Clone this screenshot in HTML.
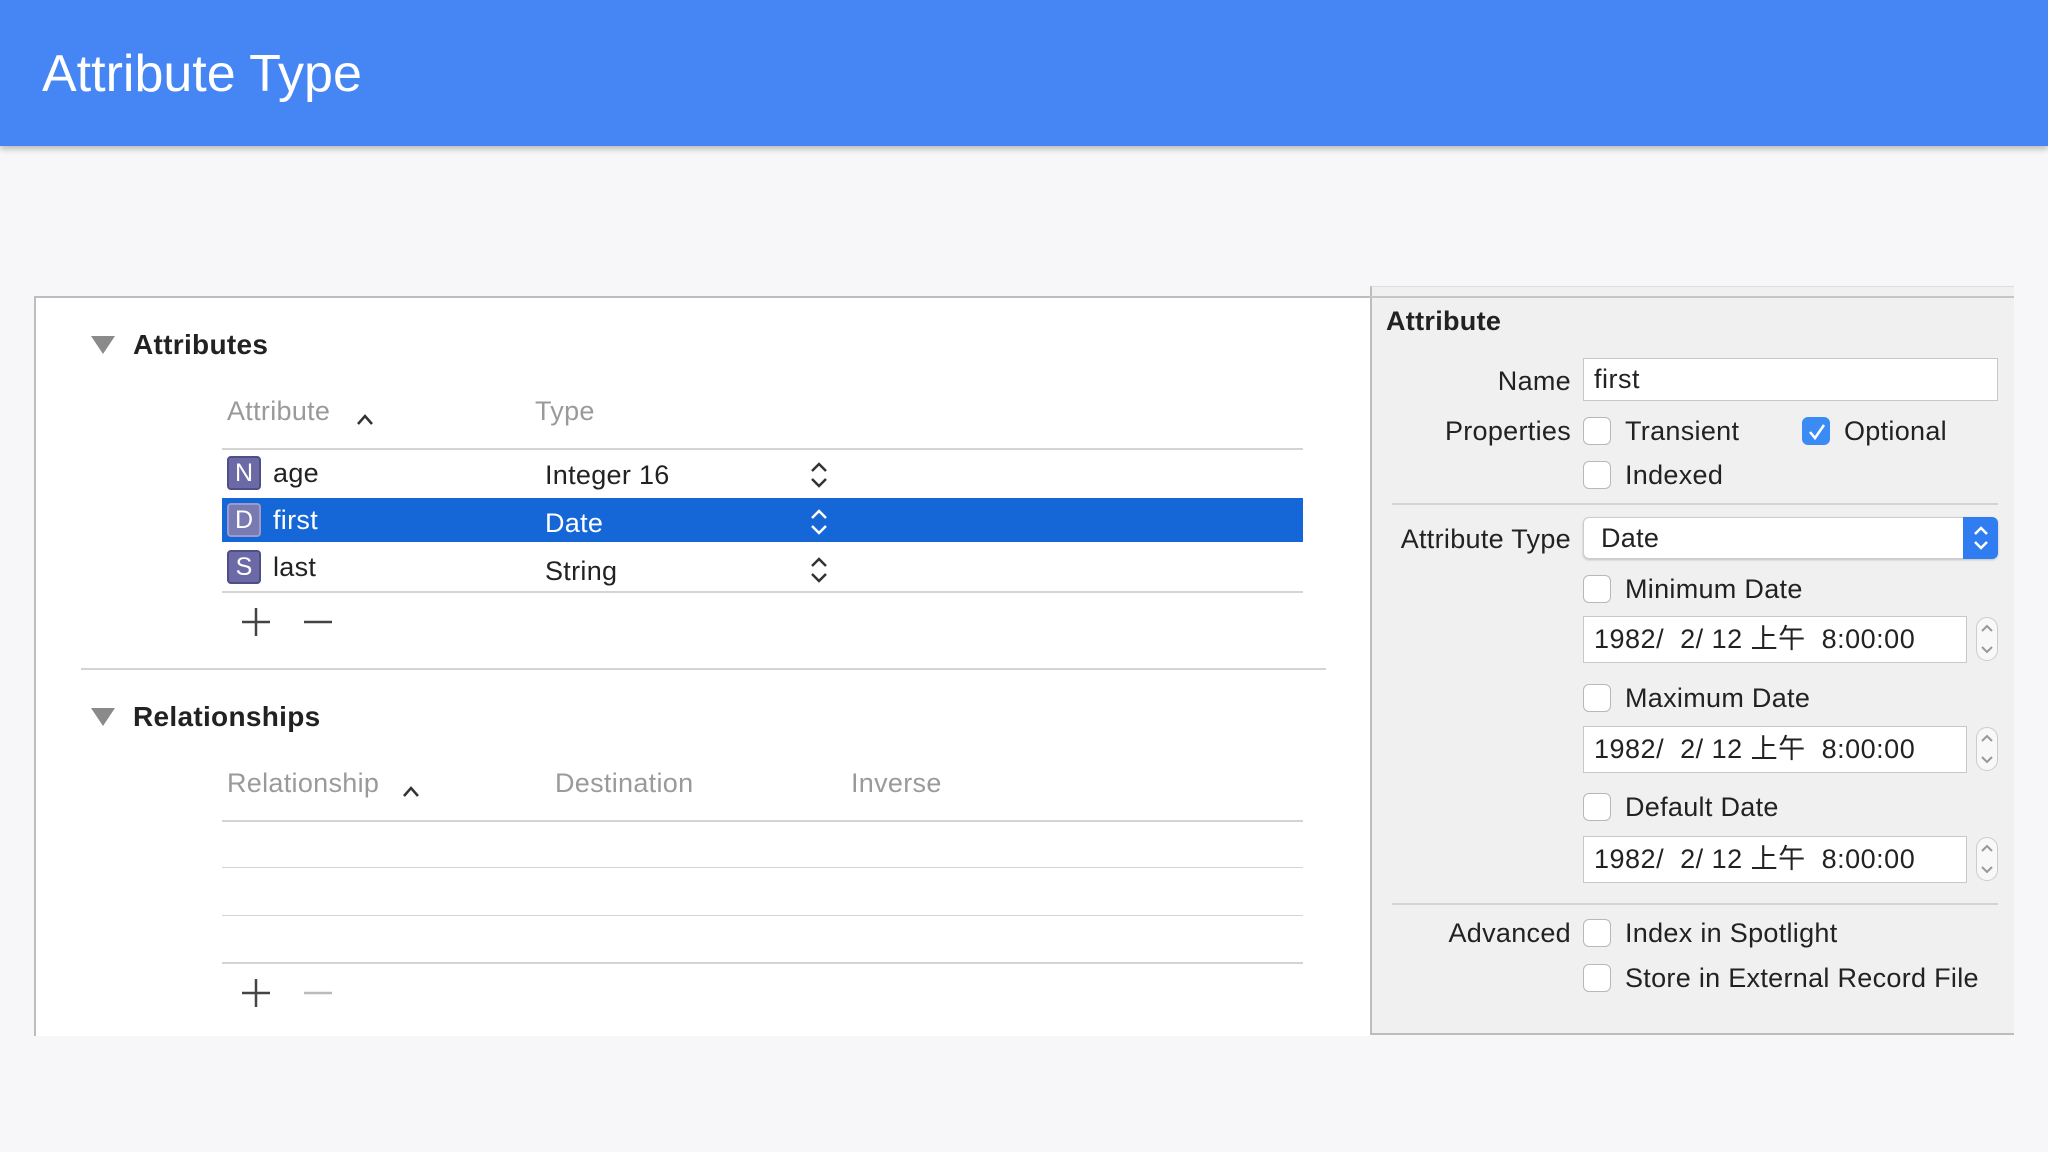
<!DOCTYPE html>
<html><head><meta charset="utf-8"><style>
*{margin:0;padding:0;box-sizing:border-box}
body{width:2048px;height:1152px;background:#f7f7f9;font-family:"Liberation Sans","Noto Sans CJK SC",sans-serif;position:relative;overflow:hidden;color:#222}
.a{position:absolute;white-space:nowrap}
.hdr{left:0;top:0;width:2048px;height:146px;background:#4586f4;box-shadow:0 3px 6px rgba(0,0,0,.25)}
.t{font-size:27px;line-height:30px;letter-spacing:0.3px}
.cb{position:absolute;width:28px;height:28px;border:1.5px solid #b8b8b8;border-radius:6px;background:#fff}
.line{position:absolute;height:2px;background:#d4d4d4}
.ic{position:absolute;width:34px;height:34px;background:#6b6aa6;border:2px solid #4f4e86;border-radius:4px;color:#fff;font-size:25px;line-height:30px;text-align:center}
.fld{position:absolute;background:#fff;border:1.5px solid #c8c8c8;font-size:27px;line-height:56px;padding-left:10px;letter-spacing:0.5px}
.stp{position:absolute;width:22px;height:44px;border:1.5px solid #ccc;border-radius:11px;background:#f8f8f8}
</style></head><body>
<div class="a hdr"></div>
<div class="a" style="left:42px;top:44px;font-size:52px;color:#fff;line-height:60px">Attribute Type</div>

<div class="a" style="left:34px;top:296px;width:1336px;height:740px;background:#fff;border-left:2px solid #bdbdbd;border-top:2px solid #bdbdbd"></div>
<div class="a" style="left:91px;top:336px;width:0;height:0;border-left:12px solid transparent;border-right:12px solid transparent;border-top:18px solid #8a8a8a"></div>
<div class="a t" style="left:133px;top:330px;font-weight:bold;font-size:28px">Attributes</div>
<div class="a t" style="left:227px;top:396px;color:#9a9a9a">Attribute</div>
<svg class="a" style="left:356px;top:412px" width="18" height="14"><path d="M2 12 L9 4 L16 12" stroke="#333" stroke-width="2.5" fill="none"/></svg>
<div class="a t" style="left:535px;top:396px;color:#9a9a9a">Type</div>
<div class="line" style="left:222px;top:448px;width:1081px"></div>
<div class="a" style="left:222px;top:498px;width:1081px;height:44px;background:#1566d6"></div>
<div class="ic" style="left:227px;top:456px">N</div>
<div class="a t" style="left:273px;top:458px">age</div>
<div class="a t" style="left:545px;top:460px">Integer 16</div>
<div class="ic" style="left:227px;top:503px;background:#7a7ab3;border-color:#9a9acb">D</div>
<div class="a t" style="left:273px;top:505px;color:#fff">first</div>
<div class="a t" style="left:545px;top:508px;color:#fff">Date</div>
<div class="ic" style="left:227px;top:550px">S</div>
<div class="a t" style="left:273px;top:552px">last</div>
<div class="a t" style="left:545px;top:556px">String</div>
<svg class="a" style="left:808px;top:460px" width="22" height="30"><path d="M4 11 L11 4 L18 11 M4 19 L11 26 L18 19" stroke="#333" stroke-width="2.5" fill="none"/></svg>
<svg class="a" style="left:808px;top:507px" width="22" height="30"><path d="M4 11 L11 4 L18 11 M4 19 L11 26 L18 19" stroke="#fff" stroke-width="2.5" fill="none"/></svg>
<svg class="a" style="left:808px;top:555px" width="22" height="30"><path d="M4 11 L11 4 L18 11 M4 19 L11 26 L18 19" stroke="#333" stroke-width="2.5" fill="none"/></svg>
<div class="line" style="left:222px;top:591px;width:1081px"></div>
<svg class="a" style="left:240px;top:606px" width="32" height="32"><path d="M16 2V30M2 16H30" stroke="#444" stroke-width="2.5"/></svg>
<svg class="a" style="left:302px;top:606px" width="32" height="32"><path d="M2 16H30" stroke="#444" stroke-width="2.5"/></svg>
<div class="line" style="left:81px;top:668px;width:1245px"></div>

<div class="a" style="left:91px;top:708px;width:0;height:0;border-left:12px solid transparent;border-right:12px solid transparent;border-top:18px solid #8a8a8a"></div>
<div class="a t" style="left:133px;top:702px;font-weight:bold;font-size:28px">Relationships</div>
<div class="a t" style="left:227px;top:768px;color:#9a9a9a">Relationship</div>
<svg class="a" style="left:402px;top:784px" width="18" height="14"><path d="M2 12 L9 4 L16 12" stroke="#333" stroke-width="2.5" fill="none"/></svg>
<div class="a t" style="left:555px;top:768px;color:#9a9a9a">Destination</div>
<div class="a t" style="left:851px;top:768px;color:#9a9a9a">Inverse</div>
<div class="line" style="left:222px;top:820px;width:1081px"></div>
<div class="line" style="left:222px;top:867px;width:1081px;height:1px"></div>
<div class="line" style="left:222px;top:915px;width:1081px;height:1px"></div>
<div class="line" style="left:222px;top:962px;width:1081px"></div>
<svg class="a" style="left:240px;top:977px" width="32" height="32"><path d="M16 2V30M2 16H30" stroke="#444" stroke-width="2.5"/></svg>
<svg class="a" style="left:302px;top:977px" width="32" height="32"><path d="M2 16H30" stroke="#bbb" stroke-width="2.5"/></svg>

<div class="a" style="left:1370px;top:286px;width:644px;height:749px;background:#f0f0f0;border-left:2px solid #bdbdbd;border-bottom:2px solid #bdbdbd;border-top:1px solid #ddd"></div>
<div class="a" style="left:1370px;top:296px;width:644px;height:2px;background:#c6c6c6"></div>
<div class="a t" style="left:1386px;top:306px;font-weight:bold">Attribute</div>
<div class="a t" style="right:477px;top:366px">Name</div>
<div class="fld" style="left:1583px;top:358px;width:415px;height:43px;line-height:40px">first</div>
<div class="a t" style="right:477px;top:416px">Properties</div>
<div class="cb" style="left:1583px;top:417px"></div>
<div class="a t" style="left:1625px;top:416px">Transient</div>
<div class="cb" style="left:1802px;top:417px;background:#3a8cf4;border-color:#3a8cf4"></div>
<svg class="a" style="left:1806px;top:421px" width="22" height="22"><path d="M4 11 L9 17 L18 4" stroke="#fff" stroke-width="2.5" fill="none"/></svg>
<div class="a t" style="left:1844px;top:416px">Optional</div>
<div class="cb" style="left:1583px;top:461px"></div>
<div class="a t" style="left:1625px;top:460px">Indexed</div>
<div class="line" style="left:1392px;top:503px;width:606px"></div>
<div class="a t" style="right:477px;top:524px">Attribute Type</div>
<div class="a" style="left:1583px;top:517px;width:415px;height:42px;background:#fff;border:1px solid #ccc;border-radius:6px;box-shadow:0 1px 2px rgba(0,0,0,.2)"></div>
<div class="a t" style="left:1601px;top:523px">Date</div>
<div class="a" style="left:1963px;top:517px;width:35px;height:42px;background:#2f7df0;border-radius:0 6px 6px 0"></div>
<svg class="a" style="left:1970px;top:523px" width="22" height="30"><path d="M5 11 L11 5 L17 11 M5 19 L11 25 L17 19" stroke="#fff" stroke-width="2.5" fill="none"/></svg>

<div class="cb" style="left:1583px;top:575px"></div>
<div class="a t" style="left:1625px;top:574px">Minimum Date</div>
<div class="fld" style="left:1583px;top:616px;width:384px;height:47px;line-height:44px">1982/&nbsp; 2/ 12 上午&nbsp; 8:00:00</div>
<div class="stp" style="left:1976px;top:617px"></div>
<svg class="a" style="left:1977px;top:619px" width="20" height="40"><path d="M5 12 L10 7 L15 12 M5 28 L10 33 L15 28" stroke="#999" stroke-width="2" fill="none"/></svg>
<div class="cb" style="left:1583px;top:684px"></div>
<div class="a t" style="left:1625px;top:683px">Maximum Date</div>
<div class="fld" style="left:1583px;top:726px;width:384px;height:47px;line-height:44px">1982/&nbsp; 2/ 12 上午&nbsp; 8:00:00</div>
<div class="stp" style="left:1976px;top:727px"></div>
<svg class="a" style="left:1977px;top:729px" width="20" height="40"><path d="M5 12 L10 7 L15 12 M5 28 L10 33 L15 28" stroke="#999" stroke-width="2" fill="none"/></svg>
<div class="cb" style="left:1583px;top:793px"></div>
<div class="a t" style="left:1625px;top:792px">Default Date</div>
<div class="fld" style="left:1583px;top:836px;width:384px;height:47px;line-height:44px">1982/&nbsp; 2/ 12 上午&nbsp; 8:00:00</div>
<div class="stp" style="left:1976px;top:837px"></div>
<svg class="a" style="left:1977px;top:839px" width="20" height="40"><path d="M5 12 L10 7 L15 12 M5 28 L10 33 L15 28" stroke="#999" stroke-width="2" fill="none"/></svg>
<div class="line" style="left:1392px;top:903px;width:606px"></div>
<div class="a t" style="right:477px;top:918px">Advanced</div>
<div class="cb" style="left:1583px;top:919px"></div>
<div class="a t" style="left:1625px;top:918px">Index in Spotlight</div>
<div class="cb" style="left:1583px;top:964px"></div>
<div class="a t" style="left:1625px;top:963px">Store in External Record File</div>
</body></html>
